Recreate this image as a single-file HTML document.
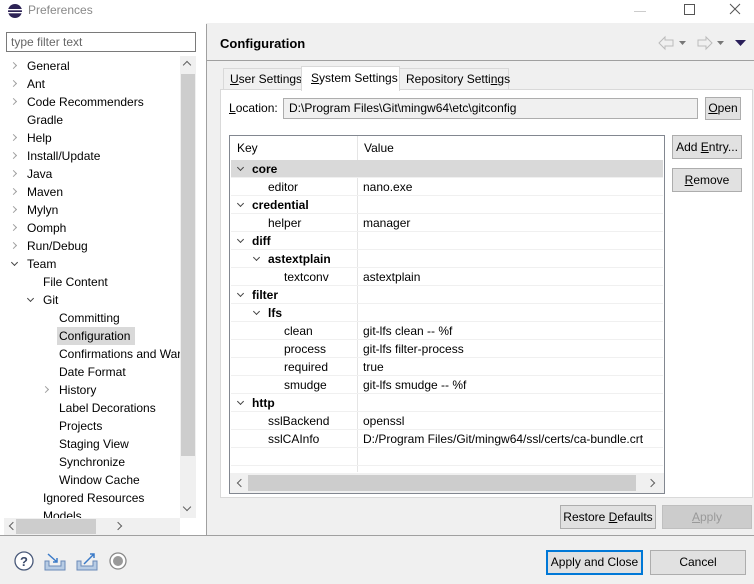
<!DOCTYPE html>
<html><head><meta charset="utf-8"><style>
*{box-sizing:border-box;margin:0;padding:0}
body{width:754px;height:584px;position:relative;background:#f0f0f0;font-family:"Liberation Sans",sans-serif;font-size:12px;color:#000;overflow:hidden}
.a{position:absolute;white-space:nowrap}
.t{position:absolute;white-space:nowrap;line-height:18px}
.btn{position:absolute;background:#e1e1e1;border:1px solid #adadad;text-align:center;line-height:20px}
.arr{position:absolute;width:5px;height:5px;border-right:1px solid #a0a0a0;border-bottom:1px solid #a0a0a0}
.r{transform:rotate(-45deg)}
.d{transform:rotate(45deg)}
.row{position:absolute;left:1px;width:432px;height:18px;border-bottom:1px solid #f0f0f0}
b{font-weight:bold}
u{text-decoration:underline}
</style></head><body>
<div class="a" style="left:0;top:0;width:754px;height:23px;background:#fff"></div>
<svg class="a" style="left:7px;top:3px" width="16" height="16"><circle cx="8" cy="8" r="7" fill="#2c2255"/><rect x="1" y="6" width="14" height="1.3" fill="#fff"/><rect x="1" y="9" width="14" height="1.3" fill="#fff"/></svg>
<div class="a" style="left:28px;top:3px;color:#888;font-size:12px">Preferences</div>
<div class="a" style="left:634px;top:11px;width:12px;border-top:1px solid #ccc"></div>
<div class="a" style="left:684px;top:4px;width:11px;height:11px;border:1px solid #555"></div>
<svg class="a" style="left:729px;top:3px" width="12" height="12"><path d="M1 1L11 11M11 1L1 11" stroke="#555"/></svg>

<!-- left panel -->
<div class="a" style="left:0;top:23px;width:206px;height:513px;background:#fff"></div>
<div class="a" style="left:6px;top:32px;width:190px;height:20px;border:1px solid #7a7a7a;color:#666;padding:2px 4px;line-height:14px">type filter text</div>
<div class="a" style="left:180px;top:56px;width:16px;height:462px;background:#f0f0f0"></div>
<div class="a" style="left:181px;top:74px;width:14px;height:382px;background:#cdcdcd"></div>
<div class="a" style="left:184px;top:62px;width:6px;height:6px;border-left:1px solid #606060;border-top:1px solid #606060;transform:rotate(45deg)"></div>
<div class="a" style="left:184px;top:504px;width:6px;height:6px;border-right:1px solid #606060;border-bottom:1px solid #606060;transform:rotate(45deg)"></div>
<div class="a" style="left:4px;top:518px;width:176px;height:17px;background:#f0f0f0"></div>
<div class="a" style="left:16px;top:519px;width:80px;height:15px;background:#cdcdcd"></div>
<div class="a" style="left:10px;top:523px;width:6px;height:6px;border-left:1px solid #606060;border-bottom:1px solid #606060;transform:rotate(45deg)"></div>
<div class="a" style="left:115px;top:523px;width:6px;height:6px;border-right:1px solid #606060;border-top:1px solid #606060;transform:rotate(45deg)"></div>
<div class="a" style="left:57px;top:327px;width:78px;height:18px;background:#d9d9d9"></div>
<div style="position:absolute;left:0;top:57px;width:180px;height:461px;overflow:hidden">
<div class="arr r" style="left:11px;top:6px"></div><div class="t" style="left:27px;top:0">General</div>
<div class="arr r" style="left:11px;top:24px"></div><div class="t" style="left:27px;top:18px">Ant</div>
<div class="arr r" style="left:11px;top:42px"></div><div class="t" style="left:27px;top:36px">Code Recommenders</div>
<div class="t" style="left:27px;top:54px">Gradle</div>
<div class="arr r" style="left:11px;top:78px"></div><div class="t" style="left:27px;top:72px">Help</div>
<div class="arr r" style="left:11px;top:96px"></div><div class="t" style="left:27px;top:90px">Install/Update</div>
<div class="arr r" style="left:11px;top:114px"></div><div class="t" style="left:27px;top:108px">Java</div>
<div class="arr r" style="left:11px;top:132px"></div><div class="t" style="left:27px;top:126px">Maven</div>
<div class="arr r" style="left:11px;top:150px"></div><div class="t" style="left:27px;top:144px">Mylyn</div>
<div class="arr r" style="left:11px;top:168px"></div><div class="t" style="left:27px;top:162px">Oomph</div>
<div class="arr r" style="left:11px;top:186px"></div><div class="t" style="left:27px;top:180px">Run/Debug</div>
<div class="arr d" style="left:12px;top:203px;border-color:#444"></div><div class="t" style="left:27px;top:198px">Team</div>
<div class="t" style="left:43px;top:216px">File Content</div>
<div class="arr d" style="left:28px;top:239px;border-color:#444"></div><div class="t" style="left:43px;top:234px">Git</div>
<div class="t" style="left:59px;top:252px">Committing</div>
<div class="t" style="left:59px;top:270px">Configuration</div>
<div class="t" style="left:59px;top:288px">Confirmations and Warnings</div>
<div class="t" style="left:59px;top:306px">Date Format</div>
<div class="arr r" style="left:43px;top:330px"></div><div class="t" style="left:59px;top:324px">History</div>
<div class="t" style="left:59px;top:342px">Label Decorations</div>
<div class="t" style="left:59px;top:360px">Projects</div>
<div class="t" style="left:59px;top:378px">Staging View</div>
<div class="t" style="left:59px;top:396px">Synchronize</div>
<div class="t" style="left:59px;top:414px">Window Cache</div>
<div class="t" style="left:43px;top:432px">Ignored Resources</div>
<div class="t" style="left:43px;top:450px">Models</div>
</div>
<div class="a" style="left:206px;top:24px;width:1px;height:512px;background:#a0a0a0"></div>

<!-- right -->
<div class="a" style="left:220px;top:36px;font-weight:bold;font-size:13px">Configuration</div>
<div class="a" style="left:207px;top:60px;width:547px;height:1px;background:#a0a0a0"></div>
<svg class="a" style="left:655px;top:34px" width="100" height="18"><path d="M4 9L10 3V6H18V12H10V15Z" fill="none" stroke="#bbb"/><path d="M24 7H31L27.5 11Z" fill="#777"/><path d="M57 9L51 3V6H43V12H51V15Z" fill="none" stroke="#bbb"/><path d="M62 7H69L65.5 11Z" fill="#777"/><path d="M80 6H91L85.5 12Z" fill="#2a1f5a"/></svg>
<!-- tabs -->
<div class="a" style="left:223px;top:68px;width:80px;height:22px;border:1px solid #d9d9d9;background:#f0f0f0;padding:3px 6px;line-height:14px"><u>U</u>ser Settings</div>
<div class="a" style="left:399px;top:68px;width:110px;height:22px;border:1px solid #d9d9d9;background:#f0f0f0;padding:3px 6px;line-height:14px">Repository Setti<u>n</u>gs</div>
<div class="a" style="left:220px;top:89px;width:533px;height:409px;background:#fff;border:1px solid #d9d9d9"></div>
<div class="a" style="left:301px;top:66px;width:99px;height:25px;border:1px solid #d9d9d9;border-bottom:none;background:#fff;padding:3px 9px;line-height:16px"><u>S</u>ystem Settings</div>
<div class="a" style="left:229px;top:101px"><u>L</u>ocation:</div>
<div class="a" style="left:283px;top:98px;width:415px;height:21px;border:1px solid #adadad;background:#f0f0f0;padding:2px 5px;line-height:15px">D:\Program Files\Git\mingw64\etc\gitconfig</div>
<div class="btn" style="left:705px;top:97px;width:36px;height:23px"><u>O</u>pen</div>
<div class="btn" style="left:672px;top:135px;width:70px;height:24px;line-height:22px">Add <u>E</u>ntry...</div>
<div class="btn" style="left:672px;top:168px;width:70px;height:24px;line-height:22px"><u>R</u>emove</div>
<!-- table -->
<div class="a" style="left:229px;top:135px;width:436px;height:359px;border:1px solid #828790;background:#fff;overflow:hidden">
<div class="a" style="left:127px;top:0;width:1px;height:336px;background:#e5e5e5"></div>
<div class="t" style="left:7px;top:3px">Key</div><div class="t" style="left:134px;top:3px">Value</div>
<div class="a" style="left:1px;top:24px;width:432px;height:18px;background:#d9d9d9"></div>
<div style="position:absolute;left:0;top:24px;width:434px">
<div class="row" style="top:0"></div><div class="arr d" style="left:8px;top:5px;border-color:#444"></div><div class="t" style="left:22px;top:0"><b>core</b></div>
<div class="row" style="top:18px"></div><div class="t" style="left:38px;top:18px">editor</div><div class="t" style="left:133px;top:18px">nano.exe</div>
<div class="row" style="top:36px"></div><div class="arr d" style="left:8px;top:41px;border-color:#444"></div><div class="t" style="left:22px;top:36px"><b>credential</b></div>
<div class="row" style="top:54px"></div><div class="t" style="left:38px;top:54px">helper</div><div class="t" style="left:133px;top:54px">manager</div>
<div class="row" style="top:72px"></div><div class="arr d" style="left:8px;top:77px;border-color:#444"></div><div class="t" style="left:22px;top:72px"><b>diff</b></div>
<div class="row" style="top:90px"></div><div class="arr d" style="left:24px;top:95px;border-color:#444"></div><div class="t" style="left:38px;top:90px"><b>astextplain</b></div>
<div class="row" style="top:108px"></div><div class="t" style="left:54px;top:108px">textconv</div><div class="t" style="left:133px;top:108px">astextplain</div>
<div class="row" style="top:126px"></div><div class="arr d" style="left:8px;top:131px;border-color:#444"></div><div class="t" style="left:22px;top:126px"><b>filter</b></div>
<div class="row" style="top:144px"></div><div class="arr d" style="left:24px;top:149px;border-color:#444"></div><div class="t" style="left:38px;top:144px"><b>lfs</b></div>
<div class="row" style="top:162px"></div><div class="t" style="left:54px;top:162px">clean</div><div class="t" style="left:133px;top:162px">git-lfs clean -- %f</div>
<div class="row" style="top:180px"></div><div class="t" style="left:54px;top:180px">process</div><div class="t" style="left:133px;top:180px">git-lfs filter-process</div>
<div class="row" style="top:198px"></div><div class="t" style="left:54px;top:198px">required</div><div class="t" style="left:133px;top:198px">true</div>
<div class="row" style="top:216px"></div><div class="t" style="left:54px;top:216px">smudge</div><div class="t" style="left:133px;top:216px">git-lfs smudge -- %f</div>
<div class="row" style="top:234px"></div><div class="arr d" style="left:8px;top:239px;border-color:#444"></div><div class="t" style="left:22px;top:234px"><b>http</b></div>
<div class="row" style="top:252px"></div><div class="t" style="left:38px;top:252px">sslBackend</div><div class="t" style="left:133px;top:252px">openssl</div>
<div class="row" style="top:270px"></div><div class="t" style="left:38px;top:270px">sslCAInfo</div><div class="t" style="left:133px;top:270px">D:/Program Files/Git/mingw64/ssl/certs/ca-bundle.crt</div>
<div class="row" style="top:288px"></div>
<div class="row" style="top:306px"></div>
</div>
<div class="a" style="left:0;top:337px;width:434px;height:20px;background:#f0f0f0"></div>
<div class="a" style="left:18px;top:339px;width:388px;height:16px;background:#cdcdcd"></div>
<div class="a" style="left:8px;top:344px;width:6px;height:6px;border-left:1px solid #606060;border-bottom:1px solid #606060;transform:rotate(45deg)"></div>
<div class="a" style="left:418px;top:344px;width:6px;height:6px;border-right:1px solid #606060;border-top:1px solid #606060;transform:rotate(45deg)"></div>
</div>
<div class="btn" style="left:560px;top:505px;width:96px;height:24px;line-height:22px">Restore <u>D</u>efaults</div>
<div class="btn" style="left:662px;top:505px;width:90px;height:24px;line-height:22px;background:#ccc;border-color:#bfbfbf;color:#999"><u>A</u>pply</div>
<div class="a" style="left:0;top:535px;width:754px;height:1px;background:#a0a0a0"></div>
<!-- bottom icons -->
<svg class="a" style="left:12px;top:549px" width="120" height="26"><circle cx="12" cy="12" r="9" fill="#fff" stroke="#4a5a7a" stroke-width="1.3"/><text x="12" y="17" font-family="Liberation Sans" font-weight="bold" font-size="13" text-anchor="middle" fill="#3a4a6a">?</text>
<path d="M33 12V21H53V12H49V17H37V12Z" fill="#b8cce4" stroke="#6a8ab8"/><path d="M36 5L45 13M45 9V13H41" fill="none" stroke="#3a7ac8" stroke-width="1.5"/>
<path d="M65 12V21H85V12H81V17H69V12Z" fill="#b8cce4" stroke="#6a8ab8"/><path d="M72 15L82 5M78 5H82V9" fill="none" stroke="#3a7ac8" stroke-width="1.5"/>
<circle cx="106" cy="12" r="8" fill="#fff" stroke="#888" stroke-width="1.3"/><circle cx="106" cy="12" r="5" fill="#999"/></svg>
<div class="btn" style="left:546px;top:550px;width:97px;height:25px;border:2px solid #0078d7;line-height:21px">Apply and Close</div>
<div class="btn" style="left:650px;top:550px;width:96px;height:25px;line-height:23px">Cancel</div>
</body></html>
